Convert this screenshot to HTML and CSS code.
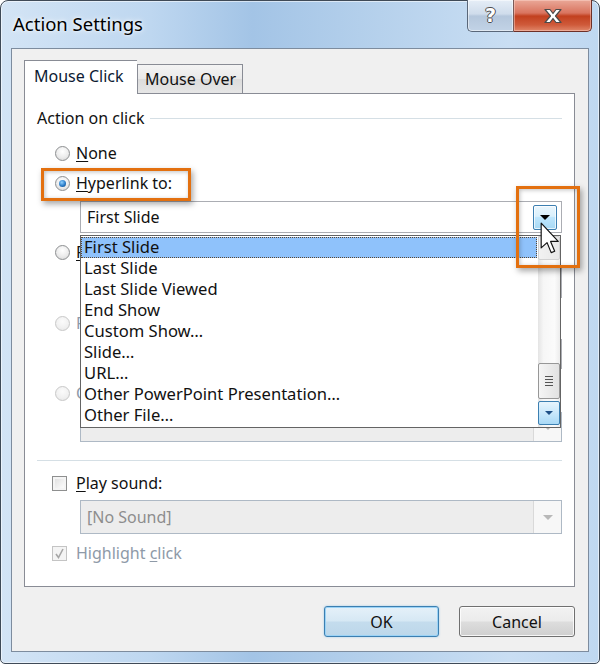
FILE: index.html
```html
<!DOCTYPE html>
<html lang="en">
<head>
    <meta charset="UTF-8">
    <title>Action Settings</title>
    <link rel="stylesheet" href="styles.css">
</head>
<body>
    <div class="window">
        <div class="titlebar">
            <span class="title">Action Settings</span>
            <div class="caption-btns">
                <div class="cap-help"><span>?</span></div>
                <div class="cap-close">
                    <svg width="22" height="16" viewBox="0 0 22 16">
                        <path d="M3 1.5 H8 L11 5.5 L14 1.5 H19 L13.5 8 L19 14.5 H14 L11 10.5 L8 14.5 H3 L8.5 8 Z" fill="#fff" stroke="#4a4a4a" stroke-width="1.2" stroke-linejoin="round"/>
                    </svg>
                </div>
            </div>
        </div>

        <div class="client">
            <div class="tabs">
                <div class="tab active">Mouse Click</div>
                <div class="tab">Mouse Over</div>
            </div>

            <div class="panel">
                <div class="group-head">
                    <span>Action on click</span>
                    <div class="group-line"></div>
                </div>

                <div class="row row-none">
                    <span class="radio"></span>
                    <span class="label"><u>N</u>one</span>
                </div>
                <div class="row row-link">
                    <span class="radio on"></span>
                    <span class="label"><u>H</u>yperlink to:</span>
                </div>
                <div class="combo combo-link">
                    <span class="combo-text">First Slide</span>
                    <span class="combo-btn hot"><span class="tri"></span></span>
                </div>

                <!-- rows hidden behind the open list: only their first letter peeks out -->
                <div class="row row-prog">
                    <span class="radio"></span>
                    <span class="label"><u>R</u></span>
                </div>
                <div class="field field-prog"></div>

                <div class="row row-macro">
                    <span class="radio off"></span>
                    <span class="label muted">R</span>
                </div>
                <div class="field field-macro"></div>

                <div class="row row-object">
                    <span class="radio off"></span>
                    <span class="label muted">O</span>
                </div>
                <div class="combo combo-object disabled">
                    <span class="combo-text"></span>
                    <span class="combo-btn flat"><span class="tri grey"></span></span>
                </div>

                <div class="separator"></div>

                <div class="row row-sound">
                    <span class="check"></span>
                    <span class="label"><u>P</u>lay sound:</span>
                </div>
                <div class="combo combo-sound disabled">
                    <span class="combo-text">[No Sound]</span>
                    <span class="combo-btn flat"><span class="tri grey"></span></span>
                </div>
                <div class="row row-highlight">
                    <span class="check off">
                        <svg width="13" height="13" viewBox="0 0 13 13">
                            <path d="M3 7 L5.5 10.5 L10 2" fill="none" stroke="#a6a6a6" stroke-width="1.6"/>
                        </svg>
                    </span>
                    <span class="label muted">Highlight <u>c</u>lick</span>
                </div>

                <!-- open dropdown list -->
                <div class="droplist">
                    <ul class="items">
                        <li class="selected">First Slide</li>
                        <li>Last Slide</li>
                        <li>Last Slide Viewed</li>
                        <li>End Show</li>
                        <li>Custom Show…</li>
                        <li>Slide…</li>
                        <li>URL…</li>
                        <li>Other PowerPoint Presentation…</li>
                        <li>Other File…</li>
                    </ul>
                    <div class="scrollbar">
                        <div class="sb-btn sb-up"></div>
                        <div class="sb-thumb">
                            <span></span><span></span><span></span><span></span>
                        </div>
                        <div class="sb-btn sb-down"><span class="tri blue"></span></div>
                    </div>
                </div>

                <div class="callout callout-link"></div>
                <div class="callout callout-btn"></div>

                <svg class="cursor" width="20" height="33" viewBox="0 0 17 28">
                    <path d="M1 1 L1 22 L6 17.5 L9.5 26 L12.5 24.8 L9 16.5 L15.5 16.5 Z" fill="#fff" stroke="#111" stroke-width="1" stroke-linejoin="round"/>
                </svg>
            </div>

            <div class="buttons">
                <div class="btn default">OK</div>
                <div class="btn">Cancel</div>
            </div>
        </div>
    </div>
</body>
</html>
```

FILE: styles.css
```css
/* Reset */
* {
    margin: 0;
    padding: 0;
    box-sizing: border-box;
}

body {
    width: 600px;
    height: 664px;
    background: #fff;
    font-family: "Noto Sans", "Open Sans", sans-serif;
    font-size: 16px;
    color: #111;
    overflow: hidden;
}

u {
    text-decoration: underline;
    text-underline-offset: 2px;
}

/* Window frame */
.window {
    position: relative;
    width: 600px;
    height: 664px;
    border: 1px solid #3f4a57;
    border-radius: 8px 8px 5px 5px;
    background: linear-gradient(to right, #d3e4f5 0%, #bed7f0 25%, #a3c4e6 42%, #b3cfeb 60%, #c9def3 85%, #bfd8f1 100%);
    box-shadow: inset 0 0 0 1px rgba(255, 255, 255, 0.55);
    display: flex;
    flex-direction: column;
}

.titlebar {
    position: relative;
    height: 47px;
    padding-left: 12px;
    display: flex;
    align-items: center;
}

.title {
    font-size: 18.5px;
    color: #000;
    margin-top: -3px;
    text-shadow: 0 0 6px rgba(255, 255, 255, 0.9), 0 0 3px rgba(255, 255, 255, 0.9);
}

.caption-btns {
    position: absolute;
    top: -1px;
    right: 7px;
    display: flex;
}

.cap-help,
.cap-close {
    height: 32px;
    display: flex;
    align-items: center;
    justify-content: center;
    border: 1px solid #5a6779;
    border-top: none;
}

.cap-help {
    width: 46px;
    border-right: none;
    border-radius: 0 0 0 5px;
    background: linear-gradient(#e6eef7, #cfdceb 45%, #b5c7dc 52%, #c2d3e6 100%);
    box-shadow: inset 0 0 0 1px rgba(255, 255, 255, 0.5);
}

.cap-help span {
    font-family: "DejaVu Sans", sans-serif;
    font-weight: bold;
    font-size: 19px;
    color: #fff;
    margin-top: -2px;
    text-shadow: 1px 0 0 #4d4d4d, -1px 0 0 #4d4d4d, 0 1px 0 #4d4d4d, 0 -1px 0 #4d4d4d;
}

.cap-close {
    width: 79px;
    border-color: #6d3028 #6d3028 #6d3028 #7a5a58;
    border-radius: 0 0 5px 0;
    background: linear-gradient(#eaa898, #d9745f 42%, #c2401f 52%, #cf5a3a 80%, #e0876a 100%);
    box-shadow: inset 0 0 0 1px rgba(255, 220, 210, 0.45);
}

/* Client area */
.client {
    margin: 0 10px 11px 10px;
    height: 604px;
    background: #f0f0f0;
    border: 1px solid #7d8c9e;
    padding: 11px 13px 14px 12px;
    display: flex;
    flex-direction: column;
}

.tabs {
    display: flex;
    align-items: flex-end;
    height: 33px;
    position: relative;
    z-index: 1;
}

.tab {
    width: 106px;
    height: 29px;
    border: 1px solid #898c95;
    border-bottom: none;
    padding-left: 7px;
    line-height: 28px;
    font-size: 16px;
    color: #111;
    background: linear-gradient(#f4f4f4, #e9e9e9 50%, #dcdcdc 51%, #e6e6e6);
}

.tab.active {
    width: 113px;
    height: 34px;
    margin-bottom: -1px;
    padding-left: 9px;
    line-height: 30px;
    background: #fff;
    border-right: none;
    color: #0c1a33;
}

/* Tab panel */
.panel {
    position: relative;
    width: 551px;
    height: 494px;
    background: #fff;
    border: 1px solid #898c95;
    padding: 0 12px 0 0;
    display: flex;
    flex-direction: column;
}

.group-head {
    display: flex;
    align-items: center;
    height: 20px;
    margin-top: 14px;
    padding-left: 12px;
}

.group-line {
    flex: 1;
    height: 1px;
    margin-left: 6px;
    background: #d5dfe5;
}

.row {
    display: flex;
    align-items: center;
    height: 20px;
    margin-left: 30px;
}

.label {
    margin-left: 6px;
    white-space: nowrap;
}

.muted {
    color: #8e9aa8;
}

.row-none { margin-top: 15px; }
.row-link { margin-top: 10px; }
.row-prog { margin-top: 9px; }
.row-macro { margin-top: 15px; }
.row-object { margin-top: 14px; }

.row-sound,
.row-highlight {
    margin-left: 27px;
}

.row-sound { margin-top: 12px; }
.row-highlight { margin-top: 9px; }

.row-sound .label,
.row-highlight .label {
    margin-left: 9px;
}

/* Radio buttons and check boxes */
.radio {
    position: relative;
    width: 15px;
    height: 15px;
    border-radius: 50%;
    border: 1px solid #8d8f91;
    background: radial-gradient(circle at 50% 35%, #ffffff 0%, #ececec 55%, #d2d2d2 100%);
}

.radio.on::after {
    content: "";
    position: absolute;
    left: 3px;
    top: 3px;
    width: 7px;
    height: 7px;
    border-radius: 50%;
    background: radial-gradient(circle at 40% 35%, #8fd0ff 0%, #2a7cc8 55%, #103e74 100%);
}

.radio.off {
    border-color: #c8c8c8;
    background: radial-gradient(circle at 50% 35%, #fbfbfb 0%, #f0f0f0 60%, #e2e2e2 100%);
}

.check {
    width: 15px;
    height: 15px;
    border: 1px solid #8e8f8f;
    background: linear-gradient(135deg, #dcdcdc, #f6f6f6 70%, #ffffff);
    box-shadow: inset 0 0 0 2px #f4f4f4;
    display: flex;
    align-items: center;
    justify-content: center;
}

.check.off {
    border-color: #c4c4c4;
    background: #f4f4f4;
    box-shadow: none;
}

/* Combo boxes */
.combo {
    display: flex;
    align-items: center;
    margin-left: 55px;
    width: 482px;
    border: 1px solid #abadb3;
    background: #fff;
}

.combo-text {
    flex: 1;
    padding-left: 6px;
}

.combo-link {
    height: 32px;
    margin-top: 8px;
}

.combo-btn {
    display: flex;
    align-items: center;
    justify-content: center;
}

.combo-btn.hot {
    width: 24px;
    height: 25px;
    margin-right: 4px;
    border: 1px solid #3c7fb1;
    border-radius: 2px;
    background: linear-gradient(#eaf6fd, #d9f0fc 45%, #bee6fd 50%, #a7d9f5);
    box-shadow: inset 0 0 0 1px rgba(255, 255, 255, 0.7);
}

.combo-btn.flat {
    width: 28px;
    align-self: stretch;
    border-left: 1px solid #d9d9d9;
    background: #f7f7f7;
}

.tri {
    width: 0;
    height: 0;
    border-left: 5px solid transparent;
    border-right: 5px solid transparent;
    border-top: 5px solid #000;
}

.tri.grey {
    border-top-color: #b8b8b8;
}

.tri.blue {
    border-left-width: 4px;
    border-right-width: 4px;
    border-top: 4px solid #1d4f86;
}

.combo.disabled {
    background: #ededed;
    border-color: #aeb9c5;
    color: #8d8d8d;
}

.combo-object {
    height: 30px;
    margin-top: 9px;
}

.combo-sound {
    height: 34px;
    margin-top: 7px;
}

.field {
    margin-left: 55px;
    width: 482px;
    height: 30px;
    margin-top: 6px;
    border: 1px solid #abadb3;
}

.separator {
    height: 1px;
    margin: 18px 0 0 12px;
    background: #d5dfe5;
}

/* Open drop-down list */
.droplist {
    position: absolute;
    left: 55px;
    top: 141px;
    width: 481px;
    height: 193px;
    border: 1px solid #646464;
    background: #fff;
    display: flex;
    z-index: 2;
}

.items {
    list-style: none;
    flex: 1;
    padding-top: 1px;
    font-size: 16.6px;
}

.items li {
    height: 21px;
    line-height: 20px;
    padding-left: 3px;
    white-space: nowrap;
    color: #111;
}

.items li.selected {
    background: #8fc2fb;
    border: 1px dotted #5a4632;
    padding-left: 2px;
    line-height: 18px;
    margin-right: 1px;
}

.scrollbar {
    position: relative;
    width: 22px;
    background: linear-gradient(to right, #e4e4e4, #f6f6f6 25%, #fbfbfb 75%, #ececec);
}

.sb-btn {
    position: absolute;
    left: 0;
    width: 22px;
    height: 24px;
    border-radius: 2px;
}

.sb-up {
    top: 0;
    border: 1px solid #d2d2d2;
    background: linear-gradient(to right, #f2f2f2, #e8e8e8);
}

.sb-down {
    bottom: 2px;
    border: 1px solid #3c7fb1;
    background: linear-gradient(#e8f5fd, #c9e8fb 50%, #a9d9f6);
    display: flex;
    align-items: center;
    justify-content: center;
}

.sb-thumb {
    position: absolute;
    left: 0;
    bottom: 28px;
    width: 22px;
    height: 36px;
    border: 1px solid #979797;
    border-radius: 2px;
    background: linear-gradient(to right, #f5f5f5, #e2e2e2);
    display: flex;
    flex-direction: column;
    align-items: center;
    justify-content: center;
    gap: 2px;
}

.sb-thumb span {
    width: 8px;
    height: 1px;
    background: #555;
}

/* Orange call-outs and pointer */
.callout {
    position: absolute;
    border: 3px solid #e3700f;
    box-shadow: 2px 3px 6px rgba(0, 0, 0, 0.35), inset 1px 1px 4px rgba(0, 0, 0, 0.25);
    z-index: 3;
}

.callout-link {
    left: 16px;
    top: 74px;
    width: 150px;
    height: 33px;
}

.callout-btn {
    left: 491px;
    top: 92px;
    width: 64px;
    height: 82px;
}

.cursor {
    position: absolute;
    left: 515px;
    top: 128px;
    z-index: 4;
}

/* Dialog buttons */
.buttons {
    display: flex;
    justify-content: flex-end;
    gap: 20px;
    margin-top: 19px;
}

.btn {
    width: 116px;
    height: 31px;
    border: 1px solid #707070;
    border-radius: 3px;
    background: linear-gradient(#f2f2f2, #ebebeb 48%, #dddddd 52%, #cfcfcf);
    box-shadow: inset 0 0 0 1px rgba(255, 255, 255, 0.8);
    display: flex;
    align-items: center;
    justify-content: center;
    color: #111;
}

.btn.default {
    width: 115px;
    border-color: #3c7fb1;
    background: linear-gradient(#e5f1f9, #d6e8f4 48%, #c4dced 52%, #bcd7ea);
    box-shadow: inset 0 0 0 1px #9bd3f6, 0 0 2px rgba(60, 160, 230, 0.5);
}
```
